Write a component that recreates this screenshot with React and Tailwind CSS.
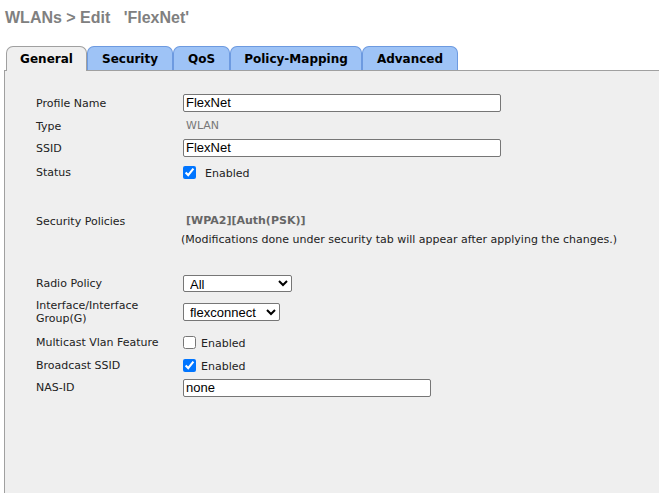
const label = "w-[147px] shrink-0 text-[11px] leading-[13px] text-[#222]";
const inputCls =
  "h-[18px] bg-white border border-[#767676] rounded-[2px] px-[2px] text-[13px] text-black font-['Liberation_Sans',Arial,sans-serif] outline-none";
const selectCls =
  "bg-white border border-[#767676] rounded-[2px] pl-[2px] text-[13px] text-black font-['Liberation_Sans',Arial,sans-serif] outline-none";

function Tab({ name, width, active }) {
  return (
    <div
      className={
        "h-[24px] flex items-center justify-center border-t border-l border-r rounded-t-[7px] text-[12px] font-bold text-black " +
        (active
          ? "bg-[#efefef] border-[#a0a0a0] -mb-px h-[25px] pb-px"
          : "bg-[#9ec3f6] border-[#6d9ae0]")
      }
      style={{ width }}
    >
      {name}
    </div>
  );
}

function Check({ checked, gap }) {
  return (
    <div className="flex items-center">
      <input
        type="checkbox"
        defaultChecked={checked}
        className="w-[13px] h-[13px] m-0 accent-[#0075ff]"
      />
      <span className={"text-[11px] text-[#222] mt-[4px] " + gap}>Enabled</span>
    </div>
  );
}

export default function App() {
  return (
    <div className="min-h-screen bg-white font-['DejaVu_Sans',Verdana,sans-serif] overflow-hidden">
      <div className="pl-[5px] pt-[6px] h-[46px] text-[16px] font-bold text-[#808080] font-['Liberation_Sans',Arial,sans-serif] whitespace-pre">
        WLANs &gt; Edit   'FlexNet'
      </div>
      <div className="flex items-end pl-[6px]">
        <Tab name="General" width={81} active />
        <Tab name="Security" width={86} />
        <Tab name="QoS" width={57} />
        <Tab name="Policy-Mapping" width={132} />
        <Tab name="Advanced" width={96} />
      </div>
      <div className="ml-[4px] border-t border-l border-[#a0a0a0] bg-[#efefef] h-[430px] pl-[31px] pt-[21px]">
        <div className="flex items-center h-[22px]">
          <div className={label}>Profile Name</div>
          <input className={inputCls + " w-[318px]"} defaultValue="FlexNet" />
        </div>
        <div className="flex items-center h-[25px]">
          <div className={label}>Type</div>
          <div className="text-[11px] text-[#777] pl-[3px]">WLAN</div>
        </div>
        <div className="flex items-center h-[18px]">
          <div className={label}>SSID</div>
          <input className={inputCls + " w-[318px]"} defaultValue="FlexNet" />
        </div>
        <div className="flex items-center h-[30px]">
          <div className={label}>Status</div>
          <Check checked gap="ml-[9px]" />
        </div>
        <div className="flex items-center h-[22px] mt-[23px]">
          <div className={label}>Security Policies</div>
          <div className="text-[11px] font-bold text-[#666] pl-[3px]">[WPA2][Auth(PSK)]</div>
        </div>
        <div className="flex items-center h-[16px]">
          <div className="w-[145px] shrink-0" />
          <div className="text-[11px] text-[#222]">
            (Modifications done under security tab will appear after applying the changes.)
          </div>
        </div>
        <div className="flex items-center h-[22px] mt-[24px]">
          <div className={label}>Radio Policy</div>
          <select className={selectCls + " w-[109px] h-[17px]"} defaultValue="All">
            <option>All</option>
            <option>802.11a only</option>
            <option>802.11g only</option>
          </select>
        </div>
        <div className="flex items-center h-[36px]">
          <div className={label}>
            Interface/Interface
            <br />
            Group(G)
          </div>
          <select className={selectCls + " w-[97px] h-[18px]"} defaultValue="flexconnect">
            <option>flexconnect</option>
            <option>management</option>
          </select>
        </div>
        <div className="flex items-center h-[22px] mt-[1px]">
          <div className={label}>Multicast Vlan Feature</div>
          <Check gap="ml-[5px]" />
        </div>
        <div className="flex items-center h-[23px] mt-[1px]">
          <div className={label}>Broadcast SSID</div>
          <Check checked gap="ml-[5px]" />
        </div>
        <div className="flex items-center h-[21px]">
          <div className={label}>NAS-ID</div>
          <input className={inputCls + " w-[248px]"} defaultValue="none" />
        </div>
      </div>
    </div>
  );
}
